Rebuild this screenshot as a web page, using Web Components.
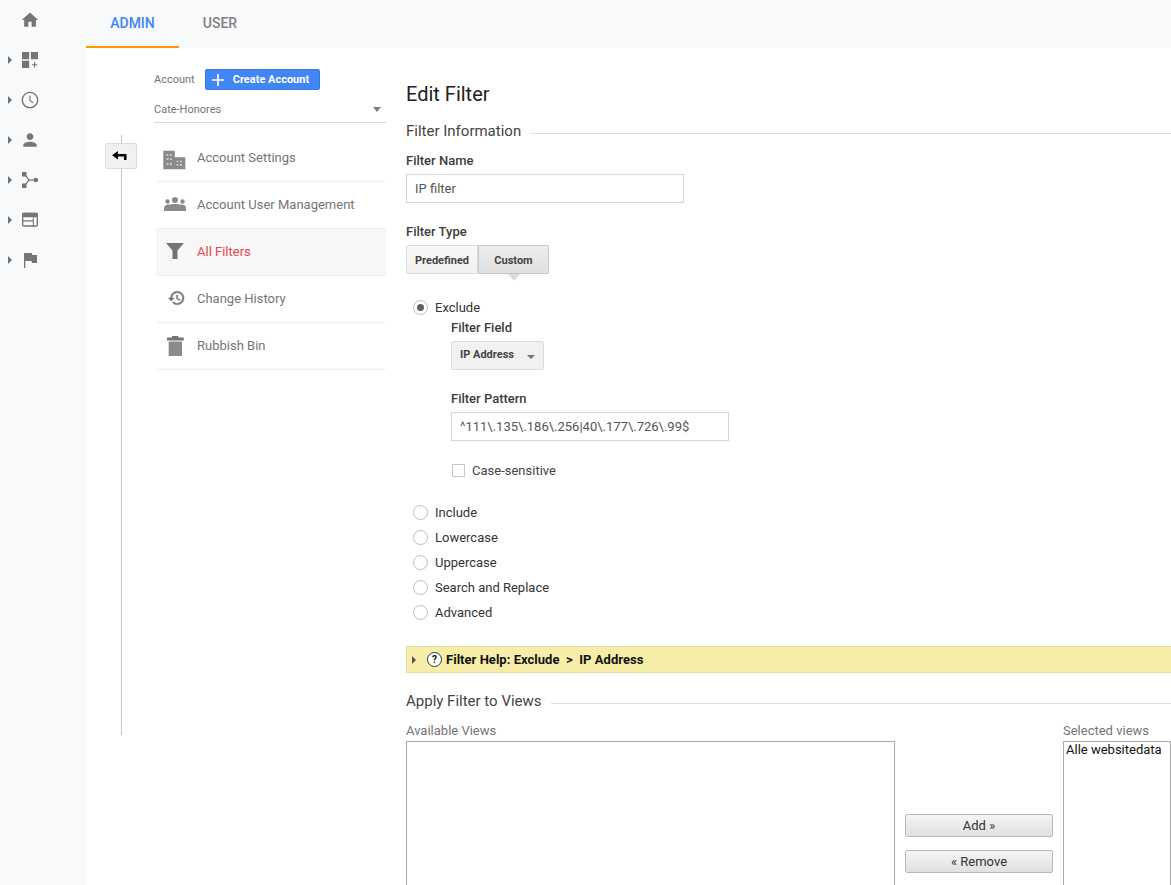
<!DOCTYPE html>
<html lang="en"><head><meta charset="utf-8"><title>Edit Filter</title>
<style>
html,body{margin:0;padding:0;height:885px;overflow:hidden;background:#fff;font-family:Roboto,"Liberation Sans",sans-serif;color:#333}
</style></head><body>
<ga-app>
  <ga-rail slot="rail"></ga-rail>
  <ga-tabs slot="tabs"></ga-tabs>
  <ga-back slot="back"></ga-back>
  <ga-nav slot="nav"></ga-nav>
  <ga-filter-form slot="main"></ga-filter-form>
</ga-app>
<script>
const def=(name,html)=>customElements.define(name,class extends HTMLElement{
  constructor(){super();this.attachShadow({mode:'open'}).innerHTML=html;}
});
const svg=(d,s=24,c='#757575')=>`<svg width="${s}" height="${s}" viewBox="0 0 24 24" fill="${c}" style="overflow:visible" aria-hidden="true">${d}</svg>`;

def('ga-app',`<style>
:host{display:grid;grid-template-columns:86px 1fr;grid-template-rows:48px 1fr;width:1171px;height:885px;overflow:hidden}
.rail{grid-row:1/3}
.body{display:grid;grid-template-columns:19px 32px 17px 232px 20px 1fr;align-items:start;min-width:0;overflow:hidden}
.b{grid-column:2}.n{grid-column:4}.m{grid-column:6;min-width:0}
</style>
<div class="rail"><slot name="rail"></slot></div>
<div><slot name="tabs"></slot></div>
<div class="body"><div class="b"><slot name="back"></slot></div><div class="n"><slot name="nav"></slot></div><div class="m"><slot name="main"></slot></div></div>`);

const railRow=(icon,arrow=true)=>`<div class="r">${arrow?'<i></i>':''}<span class="ic">${icon}</span></div>`;
def('ga-rail',`<style>
:host{display:block;height:885px;background:#f8f9fa}
.r{height:40px;display:flex;align-items:center;position:relative;padding-left:20px}
.ic{display:flex}
i{position:absolute;left:8px;top:16px;width:0;height:0;border-left:4px solid #6f7480;border-top:4px solid transparent;border-bottom:4px solid transparent}
</style>`
+railRow(svg('<path d="M10 20v-6h4v6h5v-8h3L12 3 2 12h3v8z"/>',20),false)
+railRow(svg('<path d="M2.400 2.400h8.600v8.600H2.400zM13 2.400h8.600v8.600H13zM2.400 13h8.600v8.600H2.400zM16.800 14.500h1.400v2.500h2.500v1.400h-2.500v2.500h-1.400v-2.500h-2.500V17h2.500z"/>',20))
+railRow(svg('<path d="M11.990 2C6.470 2 2 6.480 2 12s4.470 10 9.990 10C17.520 22 22 17.520 22 12S17.520 2 11.990 2zM12 20.300c-4.600 0-8.300-3.700-8.300-8.300S7.400 3.700 12 3.700s8.300 3.700 8.300 8.300-3.700 8.300-8.300 8.300zM12.600 7H11.200v6l4.300 2.800.75-1.150-3.650-2.350z"/>',20))
+railRow(svg('<path d="M12 12c2.210 0 4-1.790 4-4s-1.790-4-4-4-4 1.790-4 4 1.790 4 4 4zm0 2c-2.670 0-8 1.340-8 4v2h16v-2c0-2.660-5.330-4-8-4z"/>',20))
+railRow(svg('<rect x="2.400" y="2.400" width="5.400" height="5.400"/><rect x="2.400" y="16.200" width="5.400" height="5.400"/><circle cx="19" cy="12" r="2.800"/><path d="M5 5 11 12 5 19M11 12H18" fill="none" stroke="#757575" stroke-width="1.500"/>',20))
+railRow(svg('<rect x="3.200" y="4" width="17.600" height="15.200" rx="1.500" fill="none" stroke="#757575" stroke-width="1.600"/><rect x="2.400" y="3.200" width="19.200" height="5.500" rx="1.500"/><path d="M2.400 13H16M16 8.700V20" fill="none" stroke="#757575" stroke-width="1.300"/>',20))
+railRow(svg('<path d="M4.800 3.600h1.600v18H4.800zM6.400 3.600H14l.6 2.400h5.800v9.600h-6l-.6-2.400H6.400z"/>',20)));

def('ga-tabs',`<style>
:host{display:flex;height:48px;background:#f8f9fa;font:500 14px Roboto,sans-serif}
a{display:flex;align-items:center;justify-content:center;box-sizing:border-box;height:48px;color:#808080;padding-bottom:2px}
.on{width:93px;color:#4285f4;border-bottom:2px solid #ff9800;padding-bottom:0}
.off{width:82px}
</style><a class="on">ADMIN</a><a class="off">USER</a>`);

def('ga-back',`<style>
:host{display:block;position:relative;height:687px;padding-top:95px;box-sizing:border-box}
:host::before{content:"";position:absolute;left:16px;top:87px;bottom:0;width:1px;background:#c6c6c6}
.btn{position:relative;box-sizing:border-box;width:32px;height:26px;background:#f1f1f1;border:1px solid #dcdcdc;border-radius:2px;display:flex;align-items:center;justify-content:center;padding-right:4px}
</style><div class="btn"><svg width="14" height="12" viewBox="0 0 14 12" style="overflow:visible" aria-hidden="true"><path d="M0 5.200 6 1V4H14.500V10H12V6.500H6V9.500Z" fill="#000"/></svg></div>`);

const navRow=(icon,label,on)=>`<div class="row ${on?'on':''}"><span class="ic">${icon}</span><span class="t">${label}</span></div>`;
def('ga-nav',`<style>
:host{display:block;font-family:Roboto,sans-serif}
.top{display:flex;align-items:center;height:21px;margin-top:21px;font-size:11px;color:#757575;gap:10px}
.cta{display:flex;align-items:center;box-sizing:border-box;width:115px;height:21px;background:#4285f4;border:1px solid #3b78e7;border-radius:2px;color:#fff;font-weight:700;padding-left:6px;gap:9px}
.sel{display:flex;justify-content:space-between;align-items:center;height:33px;box-sizing:border-box;padding-top:7px;border-bottom:1px solid #d9d9d9;font-size:11px;color:#757575;padding-right:5px}
.sel b{width:0;height:0;border-top:5px solid #808080;border-left:4.500px solid transparent;border-right:4.500px solid transparent}
.list{margin:12px 0 0 2px}
.row{display:flex;align-items:center;height:47px;box-sizing:border-box;border-bottom:1px solid #eee;padding:0 0 2px 7px;color:#757575;font-size:13px}
.row.on{background:#f7f7f7;color:#e8474a}
.ic{display:flex;width:24px;justify-content:center;align-items:center;margin-right:10px}
</style>
<div class="top"><span>Account</span><div class="cta"><svg width="12" height="12" viewBox="0 0 12 12" aria-hidden="true"><path d="M5.200 0h1.600v5.200H12v1.600H6.800V12H5.200V6.800H0V5.200h5.200z" fill="#fff"/></svg><span>Create Account</span></div></div>
<div class="sel"><span>Cate-Honores</span><b></b></div>
<div class="list">`
+navRow(svg('<path fill="#8a8a8a" d="M.3 5.700h11.500v6.600h10.500v12H.3z"/><path fill="#d4d4d4" d="M3.700 9h1.700v1.700H3.700zM6.900 9h1.800v1.700H6.900zM3.700 13.300h1.700V15H3.700zM6.900 13.300h1.800V15H6.900zM3.700 18h1.700v2H3.700zM6.900 18h1.800v2H6.900zM13.700 15.700h1.700v1.600h-1.700zM17 15.700h2v1.600h-2zM13.700 19h1.700v1.700h-1.700zM17 19h2v1.700h-2z"/>'),'Account Settings')
+navRow(svg('<g fill="#8a8a8a"><circle cx="12" cy="8" r="3"/><circle cx="4.500" cy="9.500" r="2.200"/><circle cx="19.500" cy="9.500" r="2.200"/><path d="M1 19v-3c0-2 2-3.500 5-3.500 .7 0 1.300.1 1.900.2C9 12 10.500 12 12 12s3 0 4.100.7c.6-.1 1.200-.2 1.900-.2 3 0 5 1.500 5 3.500v3z"/></g>'),'Account User Management')
+navRow(svg('<path d="M3 4h18l-6.500 7.500V20h-5v-8.500z"/>'),'All Filters',true)
+navRow(svg('<g transform="translate(2 0)" stroke="#757575" stroke-width=".6"><path d="M13 3c-4.970 0-9 4.030-9 9H1l3.890 3.890.07.14L9 12H6c0-3.870 3.130-7 7-7s7 3.130 7 7-3.130 7-7 7c-1.930 0-3.680-.79-4.940-2.060l-1.420 1.420C8.270 19.990 10.510 21 13 21c4.970 0 9-4.030 9-9s-4.030-9-9-9zm-1 5v5l4.280 2.540.72-1.210-3.500-2.080V8H12z"/></g>',18),'Change History')
+navRow(svg('<path fill="#8a8a8a" d="M5.700 8.500H19V23H5.700z"/><path fill="#757575" d="M4 4.500h5V3h6.300v1.500h5.400v3H4z"/>'),'Rubbish Bin')
+`</div>`);

def('ga-section',`<style>
:host{display:flex;align-items:center;font-size:15px;color:#444;gap:9px}
.rule{flex:1;height:1px;background:#e0e0e0;margin-top:4px}
</style><slot></slot><span class="rule"></span>`);

def('ga-radio',`<style>
:host{display:flex;align-items:center;height:25px;font-size:13px;color:#333;gap:7px;margin-left:7px}
.o{box-sizing:border-box;width:15px;height:15px;border:1px solid #bdbdbd;border-radius:50%;display:flex;align-items:center;justify-content:center;background:#fff}
:host([checked]) .o::after{content:"";width:7px;height:7px;border-radius:50%;background:#616161}
</style><span class="o"></span><slot></slot>`);

def('ga-input',`<style>
:host{display:flex;align-items:center;box-sizing:border-box;height:29px;width:278px;border:1px solid #d4d4d4;padding-left:8px;font-size:13px;color:#555}
</style><slot></slot>`);

def('ga-filter-form',`<style>
:host{display:block;font-family:Roboto,sans-serif;font-size:13px;width:765px}
h1{font:400 20px/24px Roboto,sans-serif;color:#212121;margin:34px 0 0}
.lb{display:block;font-weight:500;font-size:13px;color:#3c3c3c;line-height:16px}
.seg{display:flex;position:relative;margin-top:5px;width:143px;height:29px;font-size:11px;font-weight:700;color:#444}
.seg span{display:flex;align-items:center;justify-content:center;box-sizing:border-box;height:29px;padding-top:1px;border:1px solid #dcdcdc;background:linear-gradient(#f8f8f8,#f1f1f1)}
.seg .a{width:72px;border-radius:2px 0 0 2px}
.seg .b{width:71px;border-color:#c6c6c6;background:linear-gradient(#eee,#e0e0e0);border-radius:0 2px 2px 0}
.tip{position:absolute;left:102px;top:29px;width:0;height:0;border-top:7px solid #dcdcdc;border-left:6px solid transparent;border-right:6px solid transparent}
.sub{margin-left:45px}
.drop{display:flex;align-items:center;justify-content:space-between;box-sizing:border-box;width:93px;height:29px;margin-top:5px;background:#f1f1f1;border:1px solid #dcdcdc;border-radius:2px;font-size:11px;font-weight:700;color:#444;padding:0 8px 2px}
.drop b{width:0;height:0;border-top:4px solid #757575;border-left:4px solid transparent;border-right:4px solid transparent;margin-top:4px}
.chk{display:flex;align-items:center;gap:7px;margin:22px 0 0 1px;color:#444}
.chk i{display:block;box-sizing:border-box;width:13px;height:13px;border:1px solid #c6c6c6}
.help{display:flex;align-items:center;box-sizing:border-box;height:27px;background:#f6eea8;border-top:1px solid #e4dc9c;border-bottom:1px solid #e4dc9c;border-left:1px solid #e4dc9c;font-weight:700;color:#111;font-size:13px;letter-spacing:.03px;padding-left:5px}
.help i{width:0;height:0;border-left:4px solid #555;border-top:4px solid transparent;border-bottom:4px solid transparent;margin-right:11px}
.q{box-sizing:border-box;width:15px;height:15px;border:1px solid #333;border-radius:50%;background:#fff;font-size:10px;font-weight:700;line-height:13px;text-align:center;margin-right:4px}
.views{display:grid;grid-template-columns:489px 168px 1fr;margin-top:11px}
.cap{font-size:13px;color:#757575;line-height:20px}
.box{box-sizing:border-box;height:200px;border:1px solid #a9a9a9;background:#fff;padding:0 2px;color:#111;line-height:16px}
.mid{display:flex;flex-direction:column;gap:13px;padding:73px 10px 0;align-self:start;margin-top:20px}
.btn{box-sizing:border-box;width:148px;height:23px;border:1px solid #b8b8b8;border-radius:2px;background:linear-gradient(#f5f5f5,#e0e0e0);display:flex;align-items:center;justify-content:center;color:#333;font-size:13px}
</style>
<h1>Edit Filter</h1>
<ga-section style="margin-top:16px;height:18px">Filter Information</ga-section>
<div class="lb" style="margin-top:13px">Filter Name</div>
<ga-input style="margin-top:5px">IP filter</ga-input>
<div class="lb" style="margin-top:21px">Filter Type</div>
<div class="seg"><span class="a">Predefined</span><span class="b">Custom</span><em class="tip"></em></div>
<ga-radio checked style="margin-top:21px">Exclude</ga-radio>
<div class="sub">
  <div class="lb">Filter Field</div>
  <div class="drop"><span>IP Address</span><b></b></div>
  <div class="lb" style="margin-top:21px">Filter Pattern</div>
  <ga-input style="margin-top:5px">^111\\.135\\.186\\.256|40\\.177\\.726\\.99$</ga-input>
  <div class="chk"><i></i><span>Case-sensitive</span></div>
</div>
<div style="margin-top:22px">
<ga-radio>Include</ga-radio><ga-radio>Lowercase</ga-radio><ga-radio>Uppercase</ga-radio><ga-radio>Search and Replace</ga-radio><ga-radio>Advanced</ga-radio>
</div>
<div class="help" style="margin-top:21px"><i></i><span class="q">?</span><span>Filter Help: Exclude &nbsp;&gt;&nbsp; IP Address</span></div>
<ga-section style="margin-top:19px;height:18px">Apply Filter to Views</ga-section>
<div class="views">
  <div><div class="cap">Available Views</div><div class="box"></div></div>
  <div class="mid"><div class="btn">Add »</div><div class="btn">« Remove</div></div>
  <div><div class="cap">Selected views</div><div class="box">Alle websitedata</div></div>
</div>`);
</script>
</body></html>
